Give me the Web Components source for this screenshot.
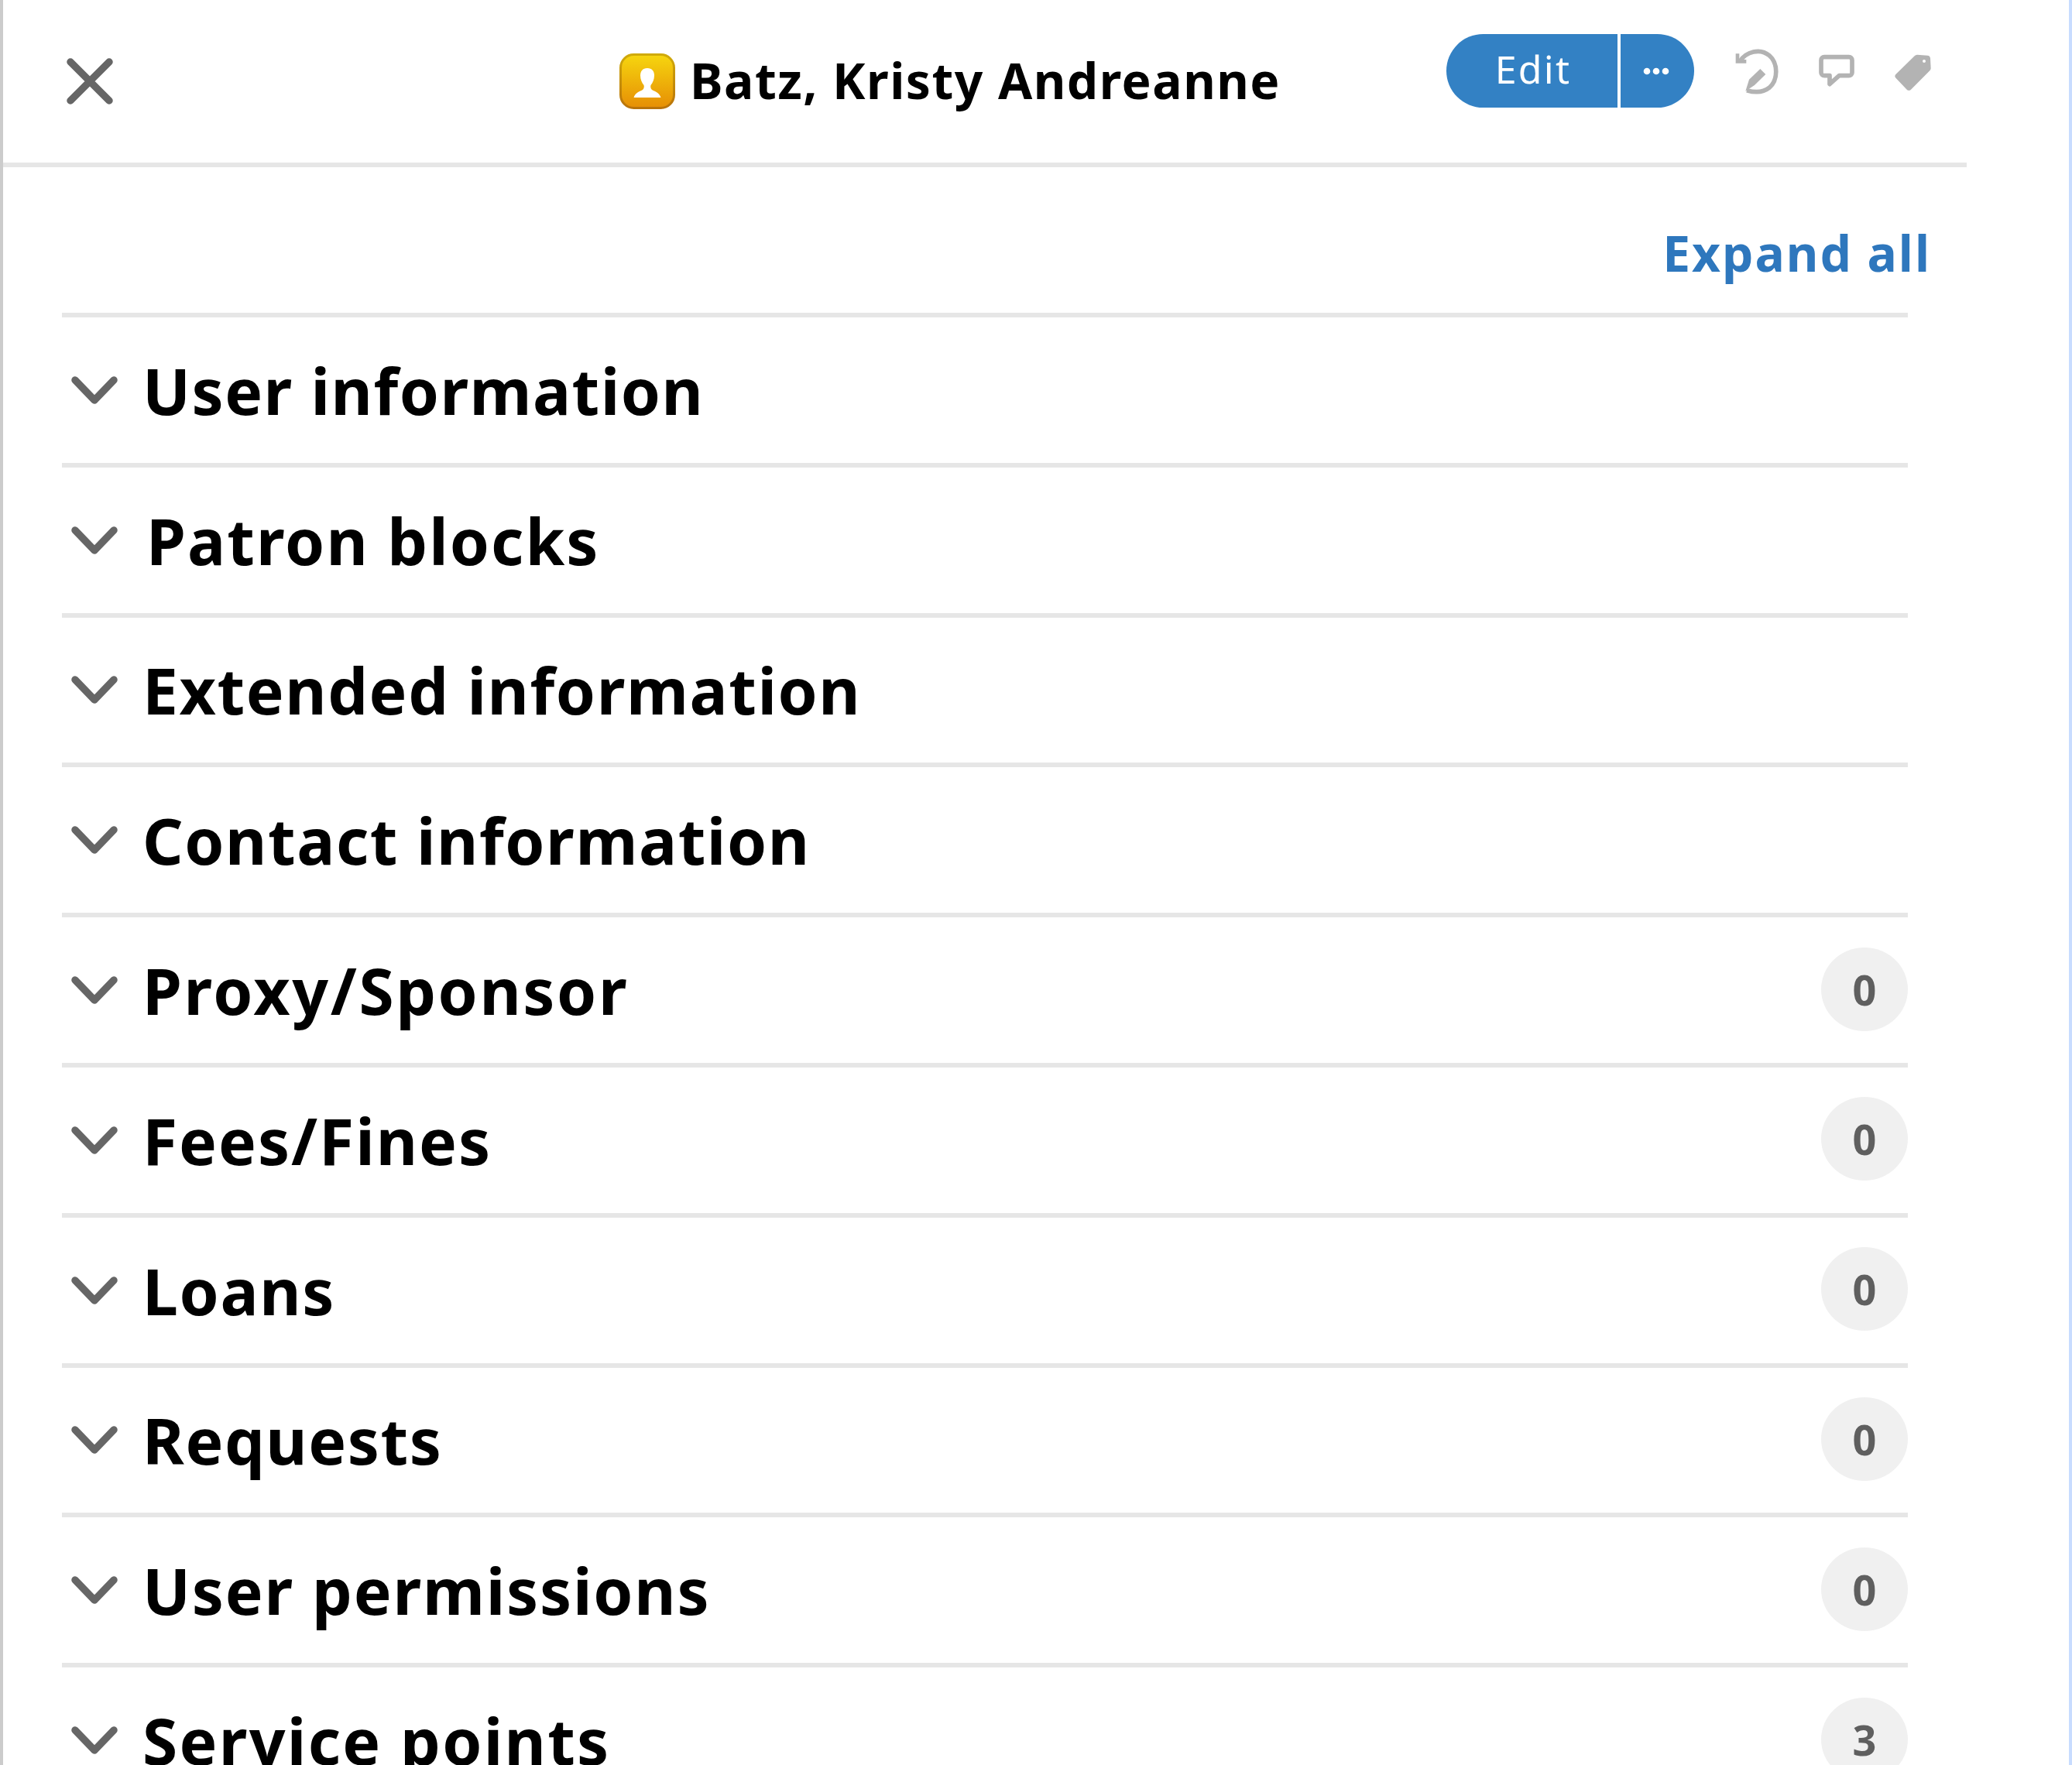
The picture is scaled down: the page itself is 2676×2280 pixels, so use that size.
<!DOCTYPE html>
<html><head><meta charset="utf-8"><style>
html,body{margin:0;padding:0;background:#fff;overflow:hidden}
body{width:2676px;height:2280px;font-family:"Noto Sans","Liberation Sans",sans-serif}
</style></head><body>
<user-pane>
<pane-header slot="head" name="Batz, Kristy Andreanne"></pane-header>
<expand-bar slot="head">Expand all</expand-bar>
<acc-row ls="1.5">User information</acc-row>
<acc-row ls="2.1" nudge="5">Patron blocks</acc-row>
<acc-row ls="1.6">Extended information</acc-row>
<acc-row ls="1.6">Contact information</acc-row>
<acc-row ls="2.6" count="0">Proxy/Sponsor</acc-row>
<acc-row ls="2" count="0">Fees/Fines</acc-row>
<acc-row ls="1.7" count="0">Loans</acc-row>
<acc-row ls="1.6" count="0">Requests</acc-row>
<acc-row ls="1.8" count="0">User permissions</acc-row>
<acc-row ls="2.3" count="3">Service points</acc-row>
</user-pane>
<script>
class UserPane extends HTMLElement{constructor(){super();this.attachShadow({mode:'open'}).innerHTML=`<style>
:host{display:block;height:2280px;width:2676px;box-sizing:border-box;overflow:hidden;border-left:4px solid #ccc;border-right:4px solid #c8dcff;background:#fff}
.list{padding:0 208px 0 76px;display:flex;flex-direction:column}
</style><slot name="head"></slot><div class="list"><slot></slot></div>`}}
customElements.define('user-pane',UserPane);

class PaneHeader extends HTMLElement{constructor(){super();this.attachShadow({mode:'open'}).innerHTML=`<style>
:host{display:flex;box-sizing:border-box;width:2536px;height:216px;border-bottom:6px solid #e6e6e6;align-items:center;padding-left:82px;color:#000}
.close{width:60px;height:60px;flex:none}
.title{display:flex;align-items:center;margin-left:654px;width:852px;flex:none}
.title svg{width:72px;height:72px;flex:none;margin-right:19px}
.name{font:700 64px/72px "Noto Sans",sans-serif;letter-spacing:1.5px;white-space:nowrap;margin-top:-2px}
.actions{align-self:flex-start;display:flex;margin-left:216px;padding-top:44px;flex:none}
.btn{display:flex;height:95px;border-radius:48px;overflow:hidden;width:320px;background:#3381c4;color:#fff}
.edit{width:221px;display:flex;align-items:center;justify-content:center;font:400 50px/95px "Noto Sans",sans-serif;letter-spacing:2.3px;box-sizing:border-box;padding-left:3px;padding-bottom:4px}
.sep{width:4px;background:#fff}
.more{flex:1;display:flex;align-items:center;justify-content:center;padding-right:4px}
.more svg{width:40px;height:12px}
.ico{flex:none;display:block}
.undo{width:62px;height:65px;margin:16px 0 0 50px}
.cmt{width:52px;height:48px;margin:24px 0 0 46px}
.tag{width:53px;height:52px;margin:24px 0 0 46px}
</style>
<svg class="close" viewBox="0 0 60 60"><path d="M5 5 L55 55 M55 5 L5 55" stroke="#666" stroke-width="9.500" stroke-linecap="round" fill="none"/></svg>
<div class="title">
<svg viewBox="0 0 72 72"><defs><linearGradient id="g" x1="0" y1="0" x2="0" y2="1"><stop offset="0" stop-color="#f6d60f"/><stop offset="1" stop-color="#e68e05"/></linearGradient><linearGradient id="b" x1="0" y1="0" x2="0" y2="1"><stop offset="0" stop-color="#d0aa0a"/><stop offset="1" stop-color="#b9730a"/></linearGradient></defs>
<rect x="1.500" y="1.500" width="69" height="69" rx="17" fill="url(#g)" stroke="url(#b)" stroke-width="3"/>
<path d="M36 19c-6 0-9 4-9 9.500 0 5 2 9.500 4.500 12.500 .6 1.500 .3 4-1 5.500-3 2.500-10 3.500-12 10.500h35c-2-7-9-8-12-10.500-1.300-1.500-1.600-4-1-5.500 2.500-3 4.500-7.500 4.500-12.500C45 23 42 19 36 19Z" fill="#fff"/></svg>
<span class="name"></span></div>
<div class="actions">
<div class="btn"><div class="edit">Edit</div><div class="sep"></div><div class="more"><svg viewBox="0 0 40 12"><circle cx="8" cy="6" r="4.300" fill="#fff"/><circle cx="20" cy="6" r="4.300" fill="#fff"/><circle cx="32" cy="6" r="4.300" fill="#fff"/></svg></div></div>
<svg class="ico undo" viewBox="414 120 186 195"><path d="M441 178 C465 140 520 125 555 155 C590 185 590 250 555 280 C530 300 495 298 468 290" fill="none" stroke="#b3b3b3" stroke-width="17"/><path d="M432 148 V178 H466" fill="none" stroke="#b3b3b3" stroke-width="14"/><path d="M463 293 L477 248 L520 207 L541 228 L498 270 Z" fill="#b3b3b3"/></svg>
<svg class="ico cmt" viewBox="738 144 156 144"><path d="M768 161 H864 a12 12 0 0 1 12 12 V221 a12 12 0 0 1-12 12 H826 L789 266 V233 H768 a12 12 0 0 1-12-12 V173 a12 12 0 0 1 12-12 Z" fill="none" stroke="#b3b3b3" stroke-width="17" stroke-linejoin="round"/></svg>
<svg class="ico tag" viewBox="1032 144 159 156"><path d="M1128 152 L1168 155 Q1178 156 1179 166 L1181 205 Q1181 210 1177 214 L1104 287 Q1096 294 1088 287 L1046 243 Q1038 235 1046 227 L1118 157 Q1122 152 1128 152Z" fill="#b3b3b3"/><circle cx="1155" cy="177" r="6" fill="#fff"/></svg>
</div>`;
this.shadowRoot.querySelector('.name').textContent=this.getAttribute('name')}}
customElements.define('pane-header',PaneHeader);

class ExpandBar extends HTMLElement{constructor(){super();this.attachShadow({mode:'open'}).innerHTML=`<style>
:host{display:flex;box-sizing:border-box;height:188px;justify-content:flex-end;align-items:center;padding:34px 178px 0 0;color:#2e77bd;font:700 64px/80px "Noto Sans",sans-serif;letter-spacing:2px}
</style><slot></slot>`}}
customElements.define('expand-bar',ExpandBar);

class AccRow extends HTMLElement{constructor(){super();const n=this.getAttribute('nudge')||0,c=this.getAttribute('count'),ls=this.getAttribute('ls')||0;this.attachShadow({mode:'open'}).innerHTML=`<style>
:host{display:flex;box-sizing:border-box;height:193.8px;border-top:6px solid #e6e6e6;align-items:center;padding-left:12px;flex:none;color:#000}
svg{width:60px;height:36px;flex:none}
.t{font:700 82px/100px "Noto Sans",sans-serif;margin-left:${32+ +n}px;letter-spacing:${ls}px;white-space:nowrap;flex:1}
.b{width:112px;height:108px;border-radius:50%/50%;background:#f0f0f0;color:#5f5f5f;font:700 54px/108px "Noto Sans",sans-serif;text-align:center;flex:none;margin-top:-3px}
</style><svg viewBox="0 0 60 36"><polyline points="5,5 30,31 55,5" fill="none" stroke="#666" stroke-width="9.500" stroke-linecap="round" stroke-linejoin="round"/></svg><span class="t"><slot></slot></span>${c!==null?`<span class="b">${c}</span>`:''}`}}
customElements.define('acc-row',AccRow);
</script>
</body></html>
